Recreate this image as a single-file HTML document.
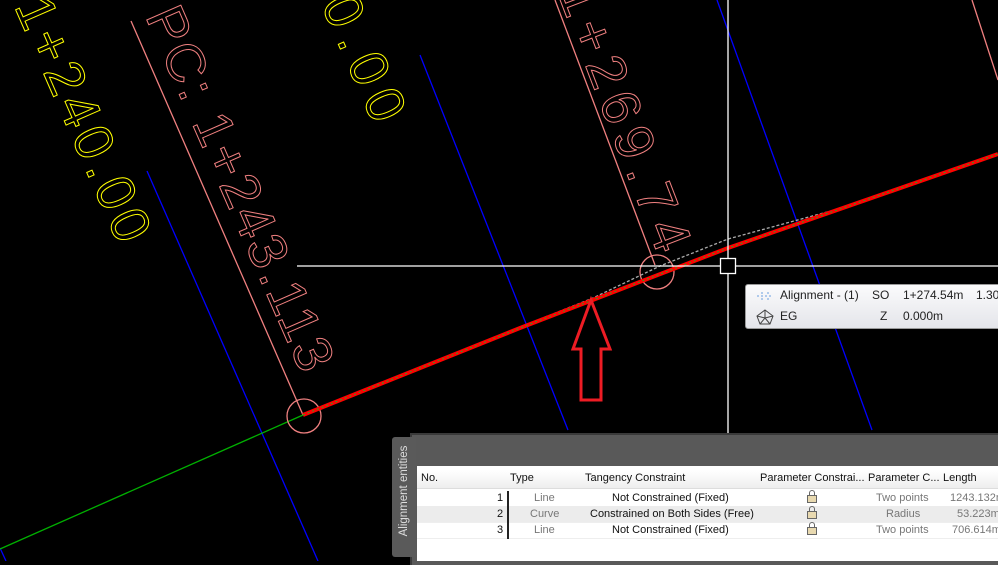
<!DOCTYPE html>
<html><head><meta charset="utf-8"><style>
body{margin:0;width:998px;height:561px;overflow:hidden;background:#000;position:relative;font-family:"Liberation Sans",sans-serif}
svg{position:absolute;left:0;top:0}
.tip{position:absolute;left:745px;top:284px;width:260px;height:43px;background:linear-gradient(#fbfbfc,#e4e5ea);border:1px solid #9a9a9a;border-radius:3px;font-size:12px;color:#222}
.tip span{position:absolute}
.panel{position:absolute;left:410px;top:433px;width:600px;height:130px;background:#595959;border-top:2px solid #3a3a3a;border-left:2px solid #3a3a3a}
.tab{position:absolute;left:392px;top:437px;width:24px;height:120px;background:#5a5a5a;border-radius:3px 0 0 3px}
.tab div{position:absolute;left:-46px;top:48px;width:116px;transform:rotate(-90deg);color:#ddd;font-size:11.5px;text-align:center}
.tbl{position:absolute;left:417px;top:466px;width:600px;height:95px;background:#fff;font-size:11px;color:#111}
.c{position:absolute;white-space:nowrap}
.hdr{position:absolute;left:0;top:4px;width:600px;height:18px;background:linear-gradient(#fff,#eee);border-bottom:1px solid #ddd}
.row{position:absolute;left:0;width:600px;height:16px;border-bottom:1px solid #eee}
.g{color:#777}
.lock{display:inline-block;width:8px;height:6px;background:#e8d9b0;border:1px solid #666;position:relative;top:2px}
.lock:before{content:"";position:absolute;left:1px;top:-6px;width:4px;height:5px;border:1px solid #666;border-bottom:none;border-radius:3px 3px 0 0}
</style></head><body>
<svg width="998" height="561">
<g fill="none" stroke-width="1.3">
<line x1="147" y1="171" x2="318" y2="561" stroke="#0000ff"/>
<line x1="420" y1="55" x2="568" y2="430" stroke="#0000ff"/>
<line x1="717" y1="0" x2="872" y2="430" stroke="#0000ff"/>
<line x1="0" y1="548" x2="6" y2="561" stroke="#0000ff"/>
<line x1="131" y1="21" x2="303" y2="415" stroke="#f08080"/>
<line x1="555" y1="0" x2="655" y2="265" stroke="#f08080"/>
<line x1="972" y1="0" x2="998" y2="80" stroke="#f08080"/>
<line x1="0" y1="549" x2="303" y2="415" stroke="#00b000"/>
<circle cx="304" cy="416" r="17" stroke="#f08080"/>
<circle cx="657" cy="272" r="17" stroke="#f08080"/>
<path d="M470 347 L593 298 L660 266 L728 239 L860 203 L960 168" stroke="#aaa" stroke-dasharray="3 2"/>
</g>
<polyline points="303,415 520,328 728,248 998,154" fill="none" stroke="#ff0000" stroke-width="4"/>
<polyline points="303,415 520,328 728,248 998,154" fill="none" stroke="#22aa22" stroke-width="1" stroke-dasharray="2 3"/>
<line x1="297" y1="266" x2="998" y2="266" stroke="#fff" stroke-width="1.3"/>
<line x1="728" y1="0" x2="728" y2="435" stroke="#fff" stroke-width="1.3"/>
<rect x="720.5" y="258.5" width="15" height="15" fill="#000" stroke="#fff" stroke-width="1.3"/>
<path d="M591 300 L610 349 L601 349 L601 400 L581 400 L581 349 L573 349 Z" fill="none" stroke="#ee1c24" stroke-width="3"/>
<g font-family="Liberation Sans,sans-serif" font-size="54" fill="none" stroke-width="1">
<text transform="translate(14,6) rotate(66.4)" stroke="#ffff00" textLength="262" lengthAdjust="spacing">1+240.00</text>
<text transform="translate(145,16) rotate(66.4)" stroke="#f08080" textLength="392" lengthAdjust="spacing">PC: 1+243.113</text>
<text transform="translate(305,-32) rotate(66.4)" stroke="#ffff00" textLength="172" lengthAdjust="spacing">60.00</text>
<text transform="translate(557,-8) rotate(69)" stroke="#f08080" textLength="282" lengthAdjust="spacing">1+269.74</text>
<text transform="translate(655,-30) rotate(66.4)" stroke="#ffff00">1</text>
</g>
</svg>
<div class="tip">
<svg width="20" height="14" style="left:9px;top:5px"><path d="M2 6h16M7 2v3M7 8v3M13 2v3M13 8v3" stroke="#6aa0e0" stroke-dasharray="2 2" fill="none"/></svg>
<span style="left:34px;top:3px">Alignment - (1)</span><span style="left:126px;top:3px">SO</span><span style="left:157px;top:3px">1+274.54m</span><span style="left:230px;top:3px">1.30</span>
<svg width="18" height="16" style="left:10px;top:24px"><path d="M9 1L17 7L14 15H4L1 7Z M9 1L9 9L4 15M9 9L14 15M1 7L9 9L17 7" stroke="#444" fill="none"/></svg>
<span style="left:34px;top:24px">EG</span><span style="left:134px;top:24px">Z</span><span style="left:157px;top:24px">0.000m</span>
</div>
<div class="panel"></div>
<div class="tab"><div>Alignment entities</div></div>
<div class="tbl">
<div class="hdr"></div>
<div class="c" style="left:4px;top:6px">No.</div>
<div class="c" style="left:93px;top:6px">Type</div>
<div class="c" style="left:168px;top:6px">Tangency Constraint</div>
<div class="c" style="left:343px;top:6px">Parameter Constrai...</div>
<div class="c" style="left:451px;top:6px">Parameter C...</div>
<div class="c" style="left:526px;top:6px">Length</div>
<div class="row" style="top:24px"></div>
<div class="row" style="top:40px;background:#ececec"></div>
<div class="row" style="top:56px"></div>
<div style="position:absolute;left:90px;top:25px;width:1.5px;height:48px;background:#222"></div>
<div class="c" style="left:80px;top:26px">1</div><div class="c g" style="left:117px;top:26px">Line</div><div class="c" style="left:195px;top:26px">Not Constrained (Fixed)</div><div class="c" style="left:390px;top:26px"><span class="lock"></span></div><div class="c g" style="left:459px;top:26px">Two points</div><div class="c g" style="left:533px;top:26px">1243.132m</div>
<div class="c" style="left:80px;top:42px">2</div><div class="c g" style="left:113px;top:42px">Curve</div><div class="c" style="left:173px;top:42px">Constrained on Both Sides (Free)</div><div class="c" style="left:390px;top:42px"><span class="lock"></span></div><div class="c g" style="left:469px;top:42px">Radius</div><div class="c g" style="left:540px;top:42px">53.223m</div>
<div class="c" style="left:80px;top:58px">3</div><div class="c g" style="left:117px;top:58px">Line</div><div class="c" style="left:195px;top:58px">Not Constrained (Fixed)</div><div class="c" style="left:390px;top:58px"><span class="lock"></span></div><div class="c g" style="left:459px;top:58px">Two points</div><div class="c g" style="left:535px;top:58px">706.614m</div>
</div>
</body></html>
